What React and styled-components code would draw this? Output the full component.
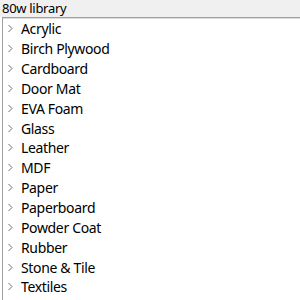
import React from "react";
import styled, { createGlobalStyle } from "styled-components";

const Global = createGlobalStyle`
  html, body { margin: 0; padding: 0; background: #ffffff; }
  body { font-family: "Noto Sans", "Open Sans", sans-serif; }
`;

const Panel = styled.div`
  width: 300px;
  height: 300px;
  display: flex;
  flex-direction: column;
  background: #ffffff;
  overflow: hidden;
`;

const Header = styled.div`
  height: 17px;
  background: #f0f0f0;
  font-size: 13px;
  line-height: 16px;
  color: #000;
  padding-left: 2px;
  letter-spacing: -0.3px;
`;

const Tree = styled.div`
  flex: 1;
  margin-left: 2px;
  border-left: 1px solid #a0a0a0;
  border-top: 1px solid #a0a0a0;
  box-shadow: inset 0 1px 0 #dcdcdc;
  padding-top: 1px;
  display: flex;
  flex-direction: column;
`;

const Row = styled.div`
  height: 19.85px;
  display: flex;
  align-items: center;
  font-size: 14px;
  letter-spacing: -0.35px;
  color: #000;
  white-space: nowrap;
`;

const Chevron = styled.svg`
  width: 6px;
  height: 9px;
  margin-left: 4px;
  margin-right: 8px;
  flex: none;
`;

const items = [
  "Acrylic",
  "Birch Plywood",
  "Cardboard",
  "Door Mat",
  "EVA Foam",
  "Glass",
  "Leather",
  "MDF",
  "Paper",
  "Paperboard",
  "Powder Coat",
  "Rubber",
  "Stone & Tile",
  "Textiles",
];

export default function App() {
  return (
    <>
      <Global />
      <Panel>
        <Header>80w library</Header>
        <Tree>
          {items.map((name) => (
            <Row key={name}>
              <Chevron viewBox="0 0 6 9">
                <polyline points="1.5,1 5,4.5 1.5,8" fill="none" stroke="#707070" strokeWidth="1" />
              </Chevron>
              {name}
            </Row>
          ))}
        </Tree>
      </Panel>
    </>
  );
}
